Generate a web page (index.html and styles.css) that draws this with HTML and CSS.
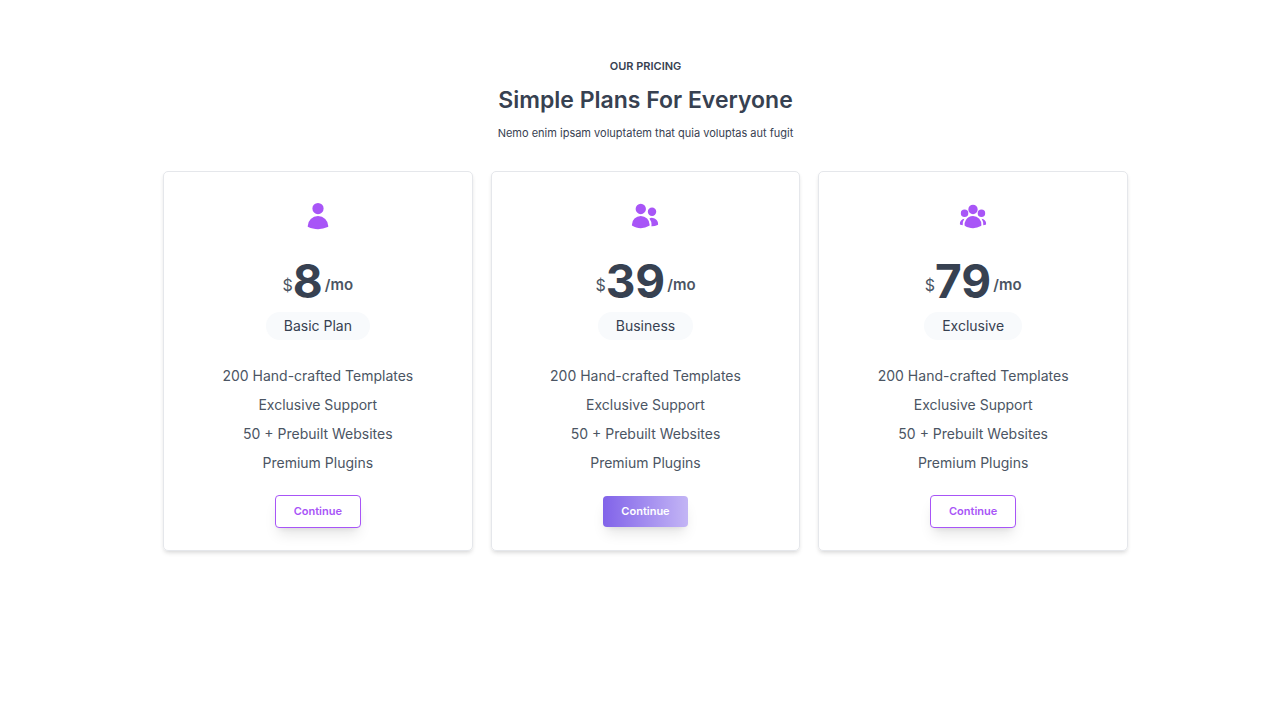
FILE: index.html
```
<!DOCTYPE html>
<html lang="en">

<head>
  <meta charset="UTF-8">
  <meta name="viewport" content="width=device-width, initial-scale=1.0">
  <title>Pricing</title>
  <link rel="stylesheet" href="styles.css">
</head>

<body>
  <section class="pricing">
    <div class="heading">
      <p class="label">OUR PRICING</p>
      <h1 class="title">Simple Plans For Everyone</h1>
      <p class="subtitle">Nemo enim ipsam voluptatem that quia voluptas aut fugit</p>
    </div>

    <div class="plans">
      <div class="card">
        <svg class="icon" viewBox="0 0 24 24" aria-hidden="true">
          <path d="M7.5 6a4.5 4.5 0 119 0 4.5 4.5 0 01-9 0zM3.751 20.105a8.25 8.25 0 0116.498 0 .75.75 0 01-.437.695A18.683 18.683 0 0112 22.5c-2.786 0-5.433-.608-7.812-1.7a.75.75 0 01-.437-.695z" />
        </svg>
        <div class="price"><span class="currency">$</span><span class="amount">8</span><span class="period">/mo</span></div>
        <h2 class="name">Basic Plan</h2>
        <ul class="features">
          <li>200 Hand-crafted Templates</li>
          <li>Exclusive Support</li>
          <li>50 + Prebuilt Websites</li>
          <li>Premium Plugins</li>
        </ul>
        <button class="btn btn-outline" type="button">Continue</button>
      </div>

      <div class="card">
        <svg class="icon" viewBox="0 0 24 24" aria-hidden="true">
          <path d="M4.5 6.375a4.125 4.125 0 118.25 0 4.125 4.125 0 01-8.25 0zM14.25 8.625a3.375 3.375 0 116.75 0 3.375 3.375 0 01-6.75 0zM1.5 19.125a7.125 7.125 0 0114.25 0v.003l-.001.119a.75.75 0 01-.363.63 13.067 13.067 0 01-6.761 1.873c-2.472 0-4.786-.684-6.76-1.873a.75.75 0 01-.364-.63l-.001-.122zM17.25 19.128l-.001.144a2.25 2.25 0 01-.233.96 10.088 10.088 0 005.06-1.01.75.75 0 00.42-.643 4.875 4.875 0 00-6.957-4.611 8.586 8.586 0 011.71 5.157v.003z" />
        </svg>
        <div class="price"><span class="currency">$</span><span class="amount">39</span><span class="period">/mo</span></div>
        <h2 class="name">Business</h2>
        <ul class="features">
          <li>200 Hand-crafted Templates</li>
          <li>Exclusive Support</li>
          <li>50 + Prebuilt Websites</li>
          <li>Premium Plugins</li>
        </ul>
        <button class="btn btn-filled" type="button">Continue</button>
      </div>

      <div class="card">
        <svg class="icon" viewBox="0 0 24 24" aria-hidden="true">
          <path fill-rule="evenodd" d="M8.25 6.75a3.75 3.75 0 117.5 0 3.75 3.75 0 01-7.5 0zM15.75 9.75a3 3 0 116 0 3 3 0 01-6 0zM2.25 9.75a3 3 0 116 0 3 3 0 01-6 0zM6.31 15.117A6.745 6.745 0 0112 12a6.745 6.745 0 016.709 7.498.75.75 0 01-.372.568A12.696 12.696 0 0112 21.75c-2.305 0-4.47-.612-6.337-1.684a.75.75 0 01-.372-.568 6.787 6.787 0 011.019-4.38z" />
          <path d="M5.082 14.254a8.287 8.287 0 00-1.308 5.135 9.687 9.687 0 01-1.764-.44l-.115-.04a.563.563 0 01-.373-.487l-.01-.121a3.75 3.75 0 013.57-4.047zM20.226 19.389a8.287 8.287 0 00-1.308-5.135 3.75 3.75 0 013.57 4.047l-.01.121a.563.563 0 01-.373.486l-.115.04c-.567.2-1.156.349-1.764.441z" />
        </svg>
        <div class="price"><span class="currency">$</span><span class="amount">79</span><span class="period">/mo</span></div>
        <h2 class="name">Exclusive</h2>
        <ul class="features">
          <li>200 Hand-crafted Templates</li>
          <li>Exclusive Support</li>
          <li>50 + Prebuilt Websites</li>
          <li>Premium Plugins</li>
        </ul>
        <button class="btn btn-outline" type="button">Continue</button>
      </div>
    </div>
  </section>
</body>

</html>
```
FILE: styles.css
```
* {
  box-sizing: border-box;
  margin: 0;
  padding: 0;
}

body {
  font-family: Inter, "Liberation Sans", sans-serif;
  color: #374151;
  background-color: #fff;
}

.pricing {
  padding: 56px 152px 56px 163px;
}

.heading {
  text-align: center;
}

.label {
  font-size: 11px;
  font-weight: 600;
  line-height: 20px;
}

.title {
  margin-top: 7px;
  font-size: 23px;
  font-weight: 600;
  line-height: 34px;
}

.subtitle {
  margin-top: 6px;
  font-size: 11px;
  line-height: 20px;
}

.plans {
  display: grid;
  grid-template-columns: repeat(3, 1fr);
  gap: 18px;
  margin-top: 28px;
}

.card {
  display: flex;
  flex-direction: column;
  align-items: center;
  padding: 29px 22px 22px;
  border: 1px solid #e5e7eb;
  border-radius: 5px;
  box-shadow: 0 3px 5px -1px rgba(0, 0, 0, 0.1), 0 2px 4px -2px rgba(0, 0, 0, 0.1);
}

.icon {
  width: 30px;
  height: 30px;
  fill: #a855f7;
}

.price {
  display: flex;
  align-items: center;
  margin-top: 22px;
  line-height: 48px;
  color: #4b5563;
}

.currency {
  padding-top: 8px;
  font-size: 16px;
}

.amount {
  font-size: 46px;
  font-weight: 700;
  color: #374151;
}

.period {
  padding-top: 8px;
  padding-left: 2px;
  font-size: 15px;
  font-weight: 600;
}

.name {
  margin-top: 3px;
  padding: 0 18px;
  border-radius: 14px;
  font-size: 14px;
  font-weight: 400;
  line-height: 28px;
  background-color: #f8fafc;
}

.features {
  display: flex;
  flex-direction: column;
  gap: 7px;
  margin: 25px 0 21px;
  list-style: none;
  text-align: center;
  font-size: 14px;
  line-height: 22px;
  color: #4b5563;
}

.btn {
  margin: auto 0;
  padding: 0 18px;
  border: none;
  border-radius: 4px;
  font-family: inherit;
  font-size: 11px;
  font-weight: 600;
  line-height: 31px;
  cursor: pointer;
  box-shadow: 0 9px 14px -3px rgba(0, 0, 0, 0.1), 0 4px 6px -4px rgba(0, 0, 0, 0.1);
}

.btn-outline {
  border: 1px solid #a855f7;
  color: #a855f7;
  background-color: #fff;
}

.btn-filled {
  color: #fff;
  background-image: linear-gradient(to right, #8163e9, #c3b5f5);
}
```
